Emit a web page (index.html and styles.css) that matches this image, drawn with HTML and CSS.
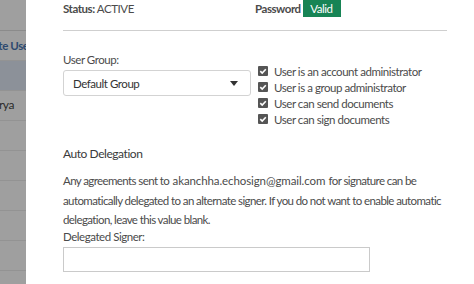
FILE: index.html
```html
<!DOCTYPE html>
<html>
<head>
<meta charset="utf-8">
<link rel="stylesheet" href="styles.css">
</head>
<body>
<div class="page">
  <aside class="backdrop">
    <div class="brow"></div>
    <div class="brow link">ate Users</div>
    <div class="brow sel"></div>
    <div class="brow name">Acharya</div>
    <div class="brow"></div>
    <div class="brow"></div>
    <div class="brow"></div>
    <div class="brow"></div>
    <div class="brow"></div>
  </aside>
  <main class="modal">
    <div class="status-row">
      <div class="status"><b>Status:</b> ACTIVE</div>
      <div class="password"><b>Password</b> <span class="badge">Valid</span></div>
    </div>
    <hr class="rule">
    <div class="group-row">
      <div class="group-col">
        <div class="label">User Group:</div>
        <div class="select">
          <span>Default Group</span>
          <span class="caret"></span>
        </div>
      </div>
      <ul class="checks">
        <li><span class="cb"><svg viewBox="0 0 10 10"><path d="M2.3 5.2 L4.2 7 L7.8 3.2" fill="none" stroke="#fff" stroke-width="1.6"/></svg></span>User is an account administrator</li>
        <li><span class="cb"><svg viewBox="0 0 10 10"><path d="M2.3 5.2 L4.2 7 L7.8 3.2" fill="none" stroke="#fff" stroke-width="1.6"/></svg></span>User is a group administrator</li>
        <li><span class="cb"><svg viewBox="0 0 10 10"><path d="M2.3 5.2 L4.2 7 L7.8 3.2" fill="none" stroke="#fff" stroke-width="1.6"/></svg></span>User can send documents</li>
        <li><span class="cb"><svg viewBox="0 0 10 10"><path d="M2.3 5.2 L4.2 7 L7.8 3.2" fill="none" stroke="#fff" stroke-width="1.6"/></svg></span>User can sign documents</li>
      </ul>
    </div>
    <h3 class="section">Auto Delegation</h3>
    <p class="desc">Any agreements sent to <span class="email">akanchha.echosign@gmail.com</span> for signature can be automatically delegated to an alternate signer. If you do not want to enable automatic delegation, leave this value blank.</p>
    <div class="label signer-label">Delegated Signer:</div>
    <div class="input"></div>
  </main>
</div>
</body>
</html>
```
FILE: styles.css
```css
html, body {
  margin: 0;
  padding: 0;
  height: 100%;
  overflow: hidden;
  background: #fff;
}
body {
  font-family: Lato, "Open Sans", sans-serif;
  color: #4b4b4b;
  font-size: 11.5px;
  letter-spacing: -0.45px;
}
.page {
  display: flex;
  height: 284px;
}
.backdrop {
  width: 26px;
  flex: none;
  background: #9f9f9f;
  overflow: hidden;
  white-space: nowrap;
}
.brow {
  height: 30px;
  border-bottom: 1px solid #939393;
  box-sizing: border-box;
  line-height: 30px;
  font-size: 12px;
  color: #2b2b2b;
  overflow: hidden;
}
.brow:first-child { height: 31px; border-bottom-color: #8b8b8b; }
.brow.link {
  color: #2d4a70;
  font-weight: bold;
  font-size: 11.5px;
  text-indent: -7px;
  letter-spacing: -0.4px;
}
.brow.name {
  direction: rtl;
  padding-right: 12px;
  line-height: 28px;
}
.brow.sel { background: #8c9199; }
.modal {
  flex: 1;
  padding: 0 27px 0 37px;
  box-sizing: border-box;
}
.status-row {
  display: flex;
  height: 23px;
  align-items: center;
  margin-top: -3px;
}
.status { width: 192px; }
.status b, .password b { font-weight: bold; }
.badge {
  display: inline-block;
  background: #178455;
  color: #fff;
  padding: 1px 8px 1px 7px;
  line-height: 15px;
}
.rule {
  border: none;
  border-top: 1px solid #cfcfcf;
  margin: 10px 0 0;
}
.group-row {
  display: flex;
  margin-top: 21px;
}
.group-col { width: 188px; }
.label {
  line-height: 16px;
  color: #4b4b4b;
}
.select {
  margin-top: 2px;
  height: 26px;
  border: 1px solid #d3d3d3;
  border-radius: 3px;
  box-sizing: border-box;
  display: flex;
  align-items: center;
  justify-content: space-between;
  padding: 0 12px 0 9px;
  color: #333;
}
.caret {
  width: 0;
  height: 0;
  border-left: 4px solid transparent;
  border-right: 4px solid transparent;
  border-top: 5px solid #333;
}
.checks {
  list-style: none;
  margin: 11px 0 0 7px;
  padding: 0;
}
.checks li {
  display: flex;
  align-items: center;
  height: 16px;
  color: #4b4b4b;
}
.cb {
  width: 10px;
  height: 10px;
  background: #555;
  border-radius: 1px;
  margin-right: 6px;
  display: inline-flex;
}
.cb svg { width: 10px; height: 10px; }
.section {
  font-size: 12px;
  font-weight: normal;
  margin: 18px 0 0;
  line-height: 18px;
  color: #3a3a3a;
}
.desc {
  margin: 8px 0 0;
  line-height: 19.5px;
  width: 384px;
  letter-spacing: -0.6px;
}
.email { letter-spacing: -0.1px; padding: 0 1px; }
.signer-label { margin-top: -1px; }
.input {
  margin-top: 2px;
  width: 307px;
  height: 25px;
  border: 1px solid #cacaca;
  box-sizing: border-box;
}
```
